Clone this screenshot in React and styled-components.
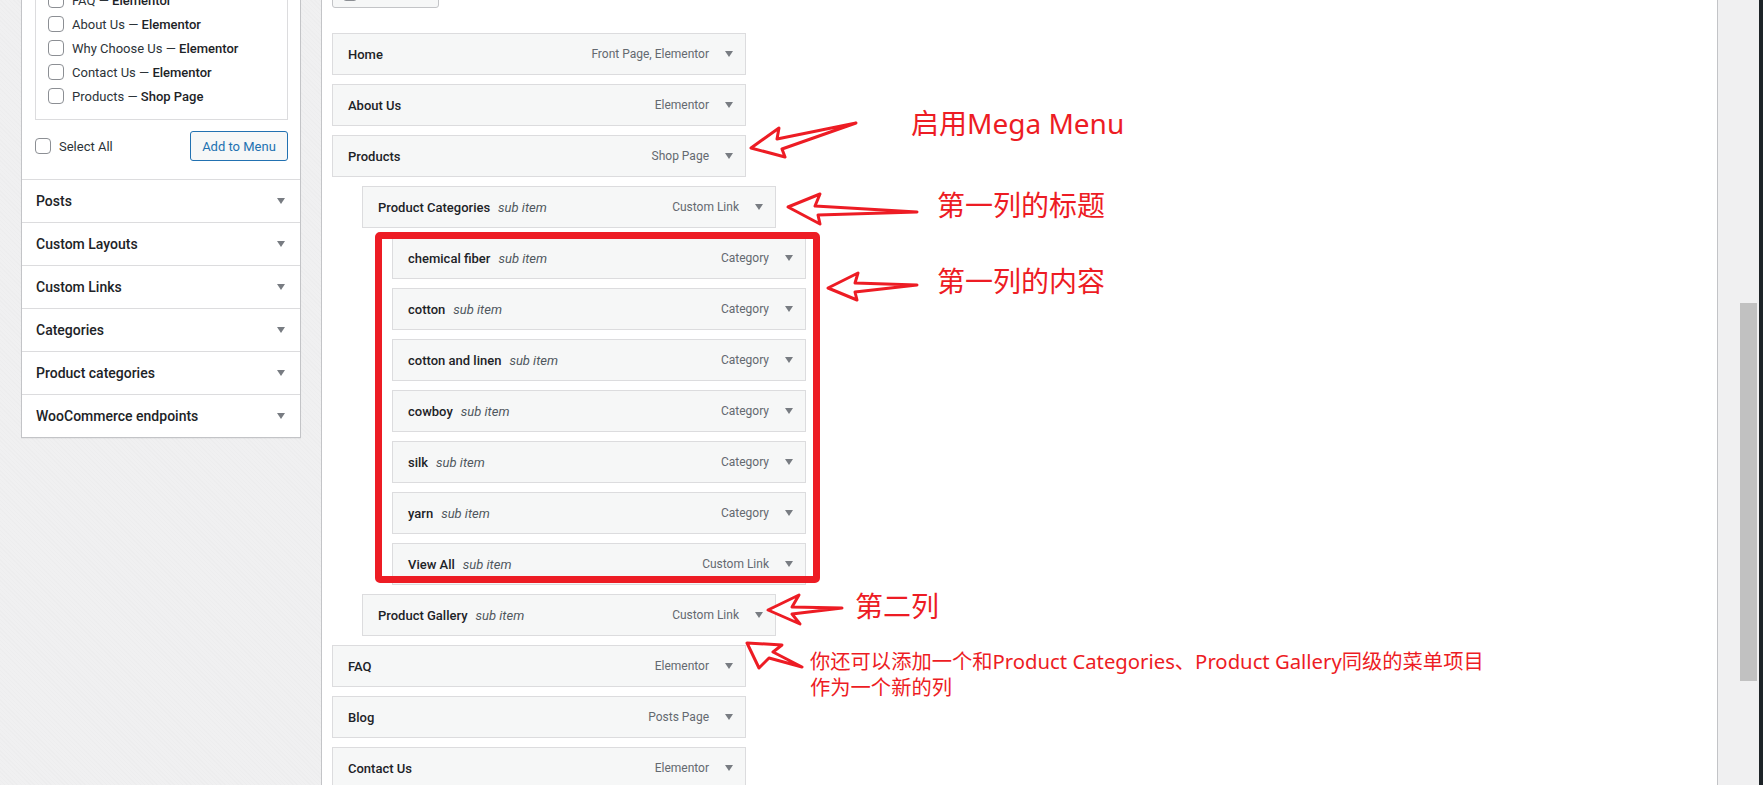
import React from "react";
import styled, { createGlobalStyle } from "styled-components";

const GlobalStyle = createGlobalStyle`
  html, body {
    margin: 0;
    padding: 0;
    background: #f0f0f1;
  }
  body {
    font-family: Roboto, "Noto Sans", sans-serif;
    -webkit-font-smoothing: antialiased;
  }
`;

const Screen = styled.div`
  display: flex;
  width: 1763px;
  height: 785px;
  overflow: hidden;
`;

const LeftColumn = styled.div`
  width: 321px;
  flex: none;
  padding-left: 21px;
  box-sizing: border-box;
  background-color: #f0f0f1;
  background-image: repeating-linear-gradient(
    45deg,
    rgba(0, 0, 0, 0.012) 0 1px,
    transparent 1px 3px
  );
`;

const Panel = styled.div`
  width: 280px;
  margin-top: -30px;
  box-sizing: border-box;
  background: #fff;
  border: 1px solid #c3c4c7;
  box-shadow: 0 1px 1px rgba(0, 0, 0, 0.04);
`;

const PanelBody = styled.div`
  padding: 0 12px 18px 13px;
`;

const CheckList = styled.div`
  border: 1px solid #dcdcde;
  padding: 16px 0 11px 12px;
`;

const CheckRow = styled.label`
  display: flex;
  align-items: center;
  gap: 8px;
  height: 24px;
  font-size: 13px;
  color: #2c3338;
  white-space: nowrap;
`;

const Box = styled.span`
  width: 16px;
  height: 16px;
  box-sizing: border-box;
  border: 1px solid #8c8f94;
  border-radius: 4px;
  background: #fff;
  flex: none;
`;

const State = styled.span`
  font-weight: 500;
  color: #1d2327;
`;

const ActionRow = styled.div`
  display: flex;
  align-items: center;
  justify-content: space-between;
  margin-top: 11px;
  height: 30px;
`;

const SelectAll = styled.label`
  display: flex;
  align-items: center;
  gap: 8px;
  font-size: 13px;
  color: #2c3338;
`;

const AddButton = styled.button`
  height: 30px;
  width: 98px;
  padding: 0;
  border: 1px solid #2271b1;
  border-radius: 3px;
  background: #f6f7f7;
  color: #2271b1;
  font-family: inherit;
  font-size: 13px;
`;

const Section = styled.div`
  display: flex;
  align-items: center;
  justify-content: space-between;
  height: 42px;
  border-top: 1px solid #dcdcde;
  padding: 0 15px 0 14px;
  font-size: 14px;
  font-weight: 500;
  color: #1d2327;
`;

const Caret = styled.span`
  width: 0;
  height: 0;
  border-left: 4px solid transparent;
  border-right: 4px solid transparent;
  border-top: 6px solid #787c82;
  flex: none;
`;

const Main = styled.div`
  position: relative;
  flex: 1;
  background: #fff;
  border-left: 1px solid #c3c4c7;
  border-right: 1px solid #c3c4c7;
  overflow: hidden;
`;

const TopButton = styled.div`
  width: 107px;
  height: 30px;
  margin: -22px 0 0 10px;
  box-sizing: border-box;
  border: 1px solid #c3c4c7;
  border-radius: 3px;
  background: #f6f7f7;
  display: flex;
  align-items: flex-end;
  padding: 0 0 6px 10px;
`;

const TinyBox = styled.span`
  width: 14px;
  height: 14px;
  box-sizing: border-box;
  border: 1px solid #8c8f94;
  border-radius: 3px;
  background: #fff;
`;

const MenuList = styled.div`
  display: flex;
  flex-direction: column;
  align-items: flex-start;
  gap: 9px;
  padding: 25px 0 0 10px;
`;

const ItemBar = styled.div`
  display: flex;
  align-items: center;
  width: 414px;
  height: 42px;
  flex: none;
  box-sizing: border-box;
  margin-left: ${({ $depth }) => $depth * 30}px;
  padding: 0 12px 0 15px;
  background: #f6f7f7;
  border: 1px solid #dcdcde;
  font-size: 13px;
`;

const ItemTitle = styled.span`
  font-weight: 500;
  color: #1d2327;
  white-space: nowrap;
`;

const SubTag = styled.span`
  margin-left: 8px;
  font-style: italic;
  color: #50575e;
`;

const ItemType = styled.span`
  margin-left: auto;
  margin-right: 16px;
  font-size: 12px;
  color: #646970;
  white-space: nowrap;
`;

const Frame = styled.div`
  position: absolute;
  left: 53px;
  top: 232px;
  width: 445px;
  height: 351px;
  box-sizing: border-box;
  border: 7px solid #ed1c24;
  border-radius: 5px;
  pointer-events: none;
`;

const Arrows = styled.svg`
  position: absolute;
  left: 0;
  top: 0;
  pointer-events: none;
`;

const Callout = styled.div`
  position: absolute;
  left: ${({ $x }) => $x - 322}px;
  top: ${({ $y }) => $y}px;
  font-family: "Noto Sans", "Noto Sans CJK SC", sans-serif;
  font-size: ${({ $size }) => $size}px;
  line-height: ${({ $lh }) => $lh || 1.2};
  color: #ed1c24;
  white-space: nowrap;
  text-shadow: 0 0 2px #fff;
`;

const Gutter = styled.div`
  display: flex;
  width: 45px;
  flex: none;
  background: #f0f0f1;
`;

const Track = styled.div`
  flex: 1;
  padding: 303px 2px 0 22px;
`;

const Thumb = styled.div`
  height: 378px;
  background: #c1c1c1;
`;

const Edge = styled.div`
  width: 4px;
  background: #1d2327;
`;

const pages = [
  ["FAQ", "Elementor"],
  ["About Us", "Elementor"],
  ["Why Choose Us", "Elementor"],
  ["Contact Us", "Elementor"],
  ["Products", "Shop Page"],
];

const sections = [
  "Posts",
  "Custom Layouts",
  "Custom Links",
  "Categories",
  "Product categories",
  "WooCommerce endpoints",
];

const items = [
  { title: "Home", type: "Front Page, Elementor", depth: 0 },
  { title: "About Us", type: "Elementor", depth: 0 },
  { title: "Products", type: "Shop Page", depth: 0 },
  { title: "Product Categories", type: "Custom Link", depth: 1, sub: true },
  { title: "chemical fiber", type: "Category", depth: 2, sub: true },
  { title: "cotton", type: "Category", depth: 2, sub: true },
  { title: "cotton and linen", type: "Category", depth: 2, sub: true },
  { title: "cowboy", type: "Category", depth: 2, sub: true },
  { title: "silk", type: "Category", depth: 2, sub: true },
  { title: "yarn", type: "Category", depth: 2, sub: true },
  { title: "View All", type: "Custom Link", depth: 2, sub: true },
  { title: "Product Gallery", type: "Custom Link", depth: 1, sub: true },
  { title: "FAQ", type: "Elementor", depth: 0 },
  { title: "Blog", type: "Posts Page", depth: 0 },
  { title: "Contact Us", type: "Elementor", depth: 0 },
];

// hand-drawn annotation arrows, page coordinates
const arrows = [
  "751,148 779,128 777,139 856,123 782,149 785,157",
  "788,207 820,194 815,206 917,212 818,215 820,224",
  "828,288 858,273 855,283 917,285 855,292 857,300",
  "768,610 799,595 792,607 842,608 792,614 800,624",
  "747,643 782,645 773,652 802,667 769,658 759,668",
];

export default function App() {
  return (
    <Screen>
      <GlobalStyle />
      <LeftColumn>
        <Panel>
          <PanelBody>
            <CheckList>
              {pages.map(([name, state]) => (
                <CheckRow key={name}>
                  <Box />
                  <span>
                    {name} — <State>{state}</State>
                  </span>
                </CheckRow>
              ))}
            </CheckList>
            <ActionRow>
              <SelectAll>
                <Box />
                Select All
              </SelectAll>
              <AddButton>Add to Menu</AddButton>
            </ActionRow>
          </PanelBody>
          {sections.map((s) => (
            <Section key={s}>
              {s}
              <Caret />
            </Section>
          ))}
        </Panel>
      </LeftColumn>

      <Main>
        <TopButton>
          <TinyBox />
        </TopButton>
        <MenuList>
          {items.map((it) => (
            <ItemBar key={it.title} $depth={it.depth}>
              <ItemTitle>{it.title}</ItemTitle>
              {it.sub && <SubTag>sub item</SubTag>}
              <ItemType>{it.type}</ItemType>
              <Caret />
            </ItemBar>
          ))}
        </MenuList>

        <Frame />
        <Arrows width="1395" height="785">
          <g transform="translate(-322 0)">
            {arrows.map((p) => (
              <polygon
                key={p}
                points={p}
                fill="#fff"
                stroke="#ed1c24"
                strokeWidth="3"
                strokeLinejoin="round"
              />
            ))}
          </g>
        </Arrows>

        <Callout $x={911} $y={107} $size={28}>启用Mega Menu</Callout>
        <Callout $x={937} $y={189} $size={28}>第一列的标题</Callout>
        <Callout $x={937} $y={265} $size={28}>第一列的内容</Callout>
        <Callout $x={855} $y={590} $size={28}>第二列</Callout>
        <Callout $x={810} $y={648} $size={20.3} $lh={1.3}>
          你还可以添加一个和Product Categories、Product Gallery同级的菜单项目
          <br />
          作为一个新的列
        </Callout>
      </Main>

      <Gutter>
        <Track>
          <Thumb />
        </Track>
        <Edge />
      </Gutter>
    </Screen>
  );
}
